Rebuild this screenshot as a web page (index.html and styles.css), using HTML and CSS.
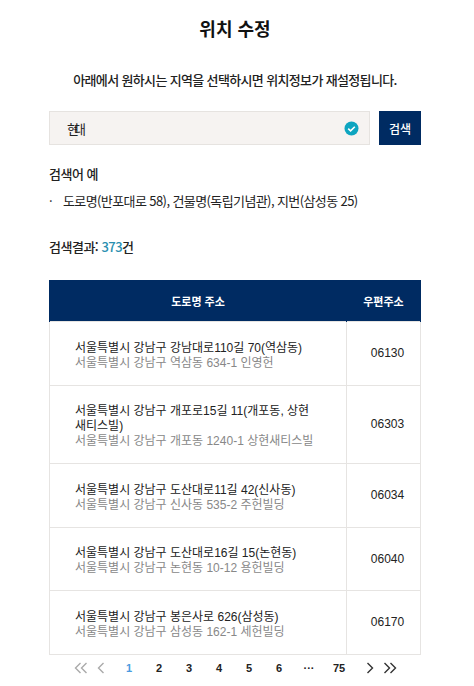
FILE: index.html
```html
<!DOCTYPE html>
<html lang="ko">
<head>
    <meta charset="UTF-8">
    <meta name="viewport" content="width=device-width, initial-scale=1.0">
    <title>위치 수정</title>
    <link rel="stylesheet" href="styles.css">
</head>
<body>
    <div class="container">
        <h1>위치 수정</h1>
        <p class="intro">아래에서 원하시는 지역을 선택하시면 위치정보가 재설정됩니다.</p>
        <div class="search-row">
            <div class="search-box">
                <span class="search-text">현대</span>
                <svg class="check" width="15" height="15" viewBox="0 0 15 15">
                    <circle cx="7.5" cy="7.5" r="7" fill="#0ea5c0"/>
                    <path d="M4.2 7.6l2.4 2.3 4.2-4.2" fill="none" stroke="#fff" stroke-width="1.6"/>
                </svg>
            </div>
            <button class="search-btn" type="button">검색</button>
        </div>
        <div class="example-title">검색어 예</div>
        <div class="example-item"><span class="dot">·</span>도로명(반포대로 58), 건물명(독립기념관), 지번(삼성동 25)</div>
        <div class="result-count">검색결과: <span class="num">373</span>건</div>
        <table class="result-table">
            <thead>
                <tr><th>도로명 주소</th><th class="col-zip">우편주소</th></tr>
            </thead>
            <tbody>
                <tr>
                    <td class="addr"><div class="road">서울특별시 강남구 강남대로110길 70(역삼동)</div><div class="jibun">서울특별시 강남구 역삼동 634-1 인영헌</div></td>
                    <td class="zip">06130</td>
                </tr>
                <tr>
                    <td class="addr"><div class="road">서울특별시 강남구 개포로15길 11(개포동, 상현 새티스빌)</div><div class="jibun">서울특별시 강남구 개포동 1240-1 상현새티스빌</div></td>
                    <td class="zip">06303</td>
                </tr>
                <tr>
                    <td class="addr"><div class="road">서울특별시 강남구 도산대로11길 42(신사동)</div><div class="jibun">서울특별시 강남구 신사동 535-2 주헌빌딩</div></td>
                    <td class="zip">06034</td>
                </tr>
                <tr>
                    <td class="addr"><div class="road">서울특별시 강남구 도산대로16길 15(논현동)</div><div class="jibun">서울특별시 강남구 논현동 10-12 용헌빌딩</div></td>
                    <td class="zip">06040</td>
                </tr>
                <tr>
                    <td class="addr"><div class="road">서울특별시 강남구 봉은사로 626(삼성동)</div><div class="jibun">서울특별시 강남구 삼성동 162-1 세헌빌딩</div></td>
                    <td class="zip">06170</td>
                </tr>
            </tbody>
        </table>
        <div class="pager">
            <svg class="arrow first" width="14" height="12" viewBox="0 0 14 12"><path d="M6.5 1L1.5 6l5 5M12.5 1l-5 5 5 5" fill="none" stroke="#aaa" stroke-width="1.4"/></svg>
            <svg class="arrow prev" width="8" height="12" viewBox="0 0 8 12"><path d="M6.5 1L1.5 6l5 5" fill="none" stroke="#aaa" stroke-width="1.4"/></svg>
            <span class="page current">1</span>
            <span class="page">2</span>
            <span class="page">3</span>
            <span class="page">4</span>
            <span class="page">5</span>
            <span class="page">6</span>
            <span class="page">···</span>
            <span class="page">75</span>
            <svg class="arrow next" width="8" height="12" viewBox="0 0 8 12"><path d="M1.5 1l5 5-5 5" fill="none" stroke="#333" stroke-width="1.4"/></svg>
            <svg class="arrow last" width="14" height="12" viewBox="0 0 14 12"><path d="M1.5 1l5 5-5 5M7.5 1l5 5-5 5" fill="none" stroke="#333" stroke-width="1.4"/></svg>
        </div>
    </div>
</body>
</html>
```

FILE: styles.css
```css
body {
    font-family: "Noto Sans CJK KR", "Liberation Sans", sans-serif;
    background-color: #fff;
    margin: 0;
    color: #222;
}
.container {
    padding: 0 53px 0 49px;
    height: 686px;
    box-sizing: border-box;
    overflow: hidden;
}
h1 {
    font-size: 18px;
    line-height: 26px;
    font-weight: 700;
    margin: 0;
    padding-top: 15px;
    text-align: center;
    color: #111;
}
.intro {
    font-size: 13px;
    line-height: 20px;
    font-weight: 500;
    letter-spacing: -0.65px;
    margin: 29px 0 0;
    text-align: center;
}
.search-row {
    display: flex;
    justify-content: space-between;
    margin-top: 21px;
}
.search-box {
    width: 321px;
    height: 34px;
    box-sizing: border-box;
    background: #f6f3f1;
    border: 1px solid #e6e3e0;
    display: flex;
    align-items: center;
    justify-content: space-between;
    padding: 0 10px 0 17px;
}
.search-text {
    font-size: 13px;
    letter-spacing: -5px;
}
.search-btn {
    width: 42px;
    height: 34px;
    padding: 0;
    border: none;
    background-color: #002b62;
    color: #fff;
    font-family: inherit;
    font-size: 12px;
    font-weight: 500;
}
.example-title {
    font-size: 13px;
    line-height: 20px;
    font-weight: 500;
    letter-spacing: -0.5px;
    margin-top: 19px;
}
.example-item {
    font-size: 13px;
    line-height: 20px;
    letter-spacing: -0.6px;
    margin-top: 7px;
}
.dot {
    display: inline-block;
    width: 14px;
}
.result-count {
    font-size: 13px;
    line-height: 20px;
    font-weight: 500;
    letter-spacing: -0.5px;
    margin-top: 26px;
}
.num {
    color: #2a8fb0;
}
.result-table {
    width: 100%;
    border-collapse: collapse;
    table-layout: fixed;
    margin-top: 23px;
}
.result-table th {
    background-color: #002b62;
    color: #fff;
    font-size: 11px;
    font-weight: 700;
    height: 41px;
    padding: 0;
    border-left: 1px solid #002b62;
    border-right: 1px solid #002b62;
}
.result-table th.col-zip {
    width: 73px;
    border-left: 1px solid #9fb0cc;
}
.result-table td {
    border: 1px solid #e6e4e2;
    padding: 0;
}
.result-table td.addr {
    padding: 18.5px 24px 14px 25px;
    font-family: "Liberation Sans", "Noto Sans CJK KR", sans-serif;
    font-size: 12px;
    line-height: 15px;
}
.road {
    color: #222;
}
.jibun {
    color: #888;
}
.result-table td.zip {
    text-align: center;
    padding-left: 8px;
    font-size: 12px;
    font-family: "Liberation Sans", sans-serif;
}
.pager {
    display: flex;
    align-items: center;
    height: 26px;
    padding-left: 25px;
    font-size: 11px;
    font-weight: 700;
}
.page {
    width: 30px;
    text-align: center;
    font-family: "Liberation Sans", sans-serif;
}
.page.current {
    color: #4a9be0;
}
.arrow.prev {
    margin: 0 9px 0 9px;
}
.arrow.next {
    margin: 0 9px 0 12px;
}
```
